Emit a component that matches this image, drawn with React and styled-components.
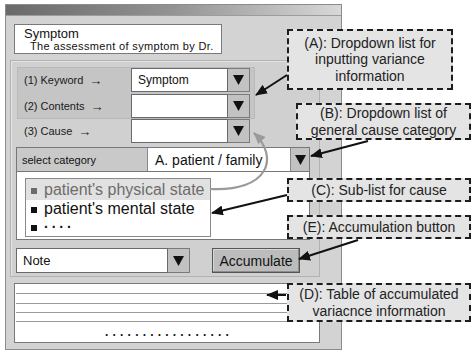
import styled, { createGlobalStyle } from "styled-components";

// page basics
const GlobalStyle = createGlobalStyle`
  html, body { margin: 0; padding: 0; background: #ffffff; }
  body { font-family: "Liberation Sans", Arial, sans-serif; color: #111; }
`;

//-Page holds the window and the annotations over it
const Page = styled.div`
  position: relative;
  width: 474px;
  height: 357px;
  overflow: hidden;
  box-sizing: border-box;
  padding: 4px 0 0 5px;
`;

// --Window frame
const Window = styled.div`
  width: 337px;
  height: 346px;
  box-sizing: border-box;
  border: 1px solid #8c8c8c;
  background: #d3d3d3;
  display: flex;
  flex-direction: column;
`;

const TitleBar = styled.div`
  height: 11px;
  flex-shrink: 0;
  box-sizing: border-box;
  border-bottom: 1px solid #9c9c9c;
  background: linear-gradient(to right, #6a6a6a, #939393 50%, #d8d8d8);
`;

// --Header box
const Header = styled.div`
  margin: 8px 0 0 8px;
  width: 208px;
  height: 30px;
  box-sizing: border-box;
  background: #fff;
  border: 1px solid #7a7a7a;
  padding: 2px 0 0 9px;
`;

const HeaderTitle = styled.div`
  font-size: 13px;
  line-height: 13px;
`;

const HeaderSub = styled.div`
  font-size: 11px;
  line-height: 13px;
  letter-spacing: 0.35px;
  padding-left: 6px;
`;

// --Group of input controls
const Group = styled.div`
  margin: 6px 0 0 4px;
  width: 310px;
  height: 217px;
  box-sizing: border-box;
  border: 1px solid #b2b2b2;
  box-shadow: inset 1px 1px 0 #e4e4e4;
  background: #d0d0d0;
  padding: 6px 5px 0 5px;
  display: flex;
  flex-direction: column;
`;

const Panel = styled.div`
  margin-left: 1px;
  width: 238px;
  box-sizing: border-box;
  display: flex;
  flex-direction: column;
  gap: 2px;
  background: ${(p) => (p.$shaded ? "#c5c5c5" : "transparent")};
  border: 1px solid ${(p) => (p.$shaded ? "#b9b9b9" : "transparent")};
  border-width: ${(p) => (p.$shaded ? "1px" : "0 1px")};
`;

const Row = styled.div`
  display: flex;
  align-items: center;
  height: 24px;
`;

const Label = styled.div`
  width: 113px;
  box-sizing: border-box;
  padding-left: 6px;
  font-size: 11px;
  color: #1a1a1a;
  display: flex;
  align-items: center;
`;

const LabelArrow = styled.span`
  margin-left: 6px;
  font-size: 13px;
  line-height: 11px;
`;

// --Dropdown parts
const Field = styled.div`
  display: flex;
  height: ${(p) => p.$h || 24}px;
`;

const FieldText = styled.div`
  width: ${(p) => p.$w}px;
  box-sizing: border-box;
  background: #fff;
  border: 1px solid #6a6a6a;
  padding-left: 6px;
  font-size: ${(p) => p.$size || 12}px;
  display: flex;
  align-items: center;
`;

const ArrowBtn = styled.div`
  width: ${(p) => p.$w || 22}px;
  box-sizing: border-box;
  background: #c2c2c2;
  border: 1px solid #7a7a7a;
  border-left: none;
  display: flex;
  align-items: center;
  justify-content: center;
`;

const Tri = () => (
  <svg width="11" height="10" viewBox="0 0 11 10">
    <polygon points="0,0 11,0 5.5,10" fill="#111" />
  </svg>
);

const Dropdown = ({ w, value, size, h, aw }) => (
  <Field $h={h}>
    <FieldText $w={w} $size={size}>
      {value}
    </FieldText>
    <ArrowBtn $w={aw}>
      <Tri />
    </ArrowBtn>
  </Field>
);

// --Category box with sub list
const Category = styled.div`
  margin-top: 4px;
  width: 294px;
  height: 93px;
  box-sizing: border-box;
  border: 1px solid #777;
  display: flex;
  flex-direction: column;
`;

const CatHead = styled.div`
  display: flex;
  height: 24px;
  box-sizing: border-box;
  border-bottom: 1px solid #777;
`;

const CatLabel = styled.div`
  width: 131px;
  box-sizing: border-box;
  background: #c9c9c9;
  border-right: 1px solid #8a8a8a;
  padding-left: 5px;
  font-size: 11px;
  display: flex;
  align-items: center;
`;

const CatValue = styled.div`
  width: 142px;
  background: #fff;
  padding-left: 7px;
  box-sizing: border-box;
  font-size: 14px;
  display: flex;
  align-items: center;
`;

const CatArrow = styled.div`
  flex: 1;
  background: #c2c2c2;
  border-left: 1px solid #8a8a8a;
  display: flex;
  align-items: center;
  justify-content: center;
`;

const CatBody = styled.div`
  flex: 1;
  background: #fff;
  padding: 6px 0 0 8px;
`;

const SubList = styled.div`
  width: 186px;
  height: 59px;
  box-sizing: border-box;
  border: 1px solid #8a8a8a;
  background: #fff;
  overflow: hidden;
`;

const Item = styled.div`
  display: flex;
  align-items: center;
  gap: 7px;
  padding-left: 5px;
  font-size: 16px;
  height: ${(p) => (p.$active ? 21 : 18)}px;
  padding-top: ${(p) => (p.$active ? 1 : 0)}px;
  box-sizing: border-box;
  background: ${(p) => (p.$active ? "#e1e1e1" : "transparent")};
  color: ${(p) => (p.$active ? "#6c6c6c" : "#111")};
`;

const Bullet = styled.span`
  width: 6px;
  height: 6px;
  flex-shrink: 0;
  margin-top: 2px;
  background: ${(p) => (p.$active ? "#6c6c6c" : "#111")};
`;

const MoreDots = styled.span`
  font-weight: bold;
  font-size: 14px;
  letter-spacing: 3px;
`;

// --Note row
const ActionRow = styled.div`
  display: flex;
  margin-top: 8px;
  gap: 22px;
`;

const AccButton = styled.div`
  width: 88px;
  height: 25px;
  box-sizing: border-box;
  background: #bcbcbc;
  border: 1px solid #555;
  box-shadow: inset -1px -1px 0 #8c8c8c, inset 1px 1px 0 #d8d8d8;
  font-size: 14px;
  display: flex;
  align-items: center;
  justify-content: center;
`;

// --Accumulated table
const Table = styled.div`
  margin: 6px 0 0 8px;
  width: 306px;
  height: 60px;
  box-sizing: border-box;
  background: #fff;
  border: 1px solid #7a7a7a;
  display: flex;
  flex-direction: column;
`;

const TableLine = styled.div`
  height: ${(p) => p.$h}px;
  margin: 0 1px;
  border-bottom: 1px solid #9a9a9a;
`;

const TableDots = styled.div`
  padding-left: 90px;
  font-size: 12px;
  line-height: 20px;
  font-weight: bold;
  letter-spacing: 4.2px;
`;

// --Annotation callouts
const Callout = styled.div`
  position: absolute;
  left: ${(p) => p.$x}px;
  top: ${(p) => p.$y}px;
  width: ${(p) => p.$w}px;
  height: ${(p) => p.$h}px;
  box-sizing: border-box;
  border: 2px dashed #1c1c1c;
  background: #e4e4e4;
  font-size: 14px;
  line-height: 16.5px;
  color: #222;
  text-align: center;
  display: flex;
  align-items: center;
  justify-content: center;
`;

const Overlay = styled.svg`
  position: absolute;
  left: 0;
  top: 0;
  pointer-events: none;
`;

const callouts = [
  { id: "A", x: 287, y: 29, w: 166, h: 61, text: ["(A): Dropdown list for", "inputting variance", "information"] },
  { id: "B", x: 296, y: 103, w: 175, h: 37, text: ["(B): Dropdown list of", "general cause category"] },
  { id: "C", x: 287, y: 178, w: 184, h: 24, text: ["(C): Sub-list for cause"] },
  { id: "E", x: 287, y: 215, w: 184, h: 24, text: ["(E): Accumulation button"] },
  { id: "D", x: 287, y: 283, w: 184, h: 39, text: ["(D): Table of accumulated", "variacnce information"] },
];

function App() {
  return (
    <>
      <GlobalStyle />
      <Page>
        <Window>
          <TitleBar />
          <Header>
            <HeaderTitle>Symptom</HeaderTitle>
            <HeaderSub>The assessment of symptom by Dr.</HeaderSub>
          </Header>

          <Group>
            <Panel $shaded>
              <Row>
                <Label>
                  (1) Keyword<LabelArrow>→</LabelArrow>
                </Label>
                <Dropdown w={97} value="Symptom" />
              </Row>
              <Row>
                <Label>
                  (2) Contents<LabelArrow>→</LabelArrow>
                </Label>
                <Dropdown w={97} value="" />
              </Row>
            </Panel>
            <Panel>
              <Row>
                <Label>
                  (3) Cause<LabelArrow>→</LabelArrow>
                </Label>
                <Dropdown w={97} value="" />
              </Row>
            </Panel>

            <Category>
              <CatHead>
                <CatLabel>select category</CatLabel>
                <CatValue>A. patient / family</CatValue>
                <CatArrow>
                  <Tri />
                </CatArrow>
              </CatHead>
              <CatBody>
                <SubList>
                  <Item $active>
                    <Bullet $active />
                    patient's physical state
                  </Item>
                  <Item>
                    <Bullet />
                    patient's mental state
                  </Item>
                  <Item>
                    <Bullet />
                    <MoreDots>····</MoreDots>
                  </Item>
                </SubList>
              </CatBody>
            </Category>

            <ActionRow>
              <Dropdown w={152} value="Note" size={13} h={25} />
              <AccButton>Accumulate</AccButton>
            </ActionRow>
          </Group>

          <Table>
            <TableLine $h={9} />
            <TableLine $h={9} />
            <TableLine $h={8} />
            <TableLine $h={8} />
            <TableDots>.................</TableDots>
          </Table>
        </Window>

        <Overlay width="474" height="357" viewBox="0 0 474 357">
          <defs>
            <marker id="headB" markerUnits="userSpaceOnUse" markerWidth="12" markerHeight="10" refX="11" refY="5" orient="auto">
              <path d="M0,0 L12,5 L0,10 z" fill="#111" />
            </marker>
            <marker id="headG" markerUnits="userSpaceOnUse" markerWidth="12" markerHeight="10" refX="11" refY="5" orient="auto">
              <path d="M0,0 L12,5 L0,10 z" fill="#9a9a9a" />
            </marker>
          </defs>
          <path d="M210 189 C268 192 280 158 254 133" fill="none" stroke="#9a9a9a" strokeWidth="2.2" markerEnd="url(#headG)" />
          <g stroke="#111" strokeWidth="2" fill="none" markerEnd="url(#headB)">
            <line x1="287" y1="75" x2="256" y2="95" />
            <line x1="368" y1="141" x2="311" y2="156" />
            <line x1="287" y1="195" x2="212" y2="213" />
            <line x1="358" y1="240" x2="299" y2="259" />
            <line x1="286" y1="295" x2="267" y2="295" />
          </g>
        </Overlay>

        {callouts.map((c) => (
          <Callout key={c.id} $x={c.x} $y={c.y} $w={c.w} $h={c.h}>
            <div>
              {c.text.map((t) => (
                <div key={t}>{t}</div>
              ))}
            </div>
          </Callout>
        ))}
      </Page>
    </>
  );
}

export default App;
